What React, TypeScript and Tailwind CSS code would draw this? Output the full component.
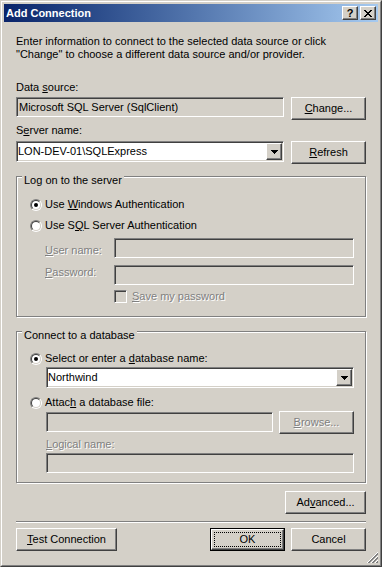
import React from "react";

const raised =
  "border border-t-white border-l-white border-r-[#404040] border-b-[#404040] shadow-[inset_-1px_-1px_0_#808080]";
const sunken =
  "border border-t-[#808080] border-l-[#808080] border-r-white border-b-white shadow-[inset_1px_1px_0_#404040,inset_-1px_-1px_0_#d4d0c8]";
const grayText = "text-[#808080] [text-shadow:1px_1px_0_#fff]";

function Button({
  children,
  className = "",
  disabled = false,
}: {
  children: React.ReactNode;
  className?: string;
  disabled?: boolean;
}) {
  return (
    <button
      type="button"
      className={`flex h-[23px] shrink-0 items-center justify-center bg-[#d4d0c8] ${raised} ${
        disabled ? grayText : "text-black"
      } ${className}`}
    >
      {children}
    </button>
  );
}

function DefaultButton({ children, className = "" }: { children: React.ReactNode; className?: string }) {
  return (
    <button type="button" className={`h-[23px] shrink-0 border border-black bg-[#d4d0c8] ${className}`}>
      <span className={`flex h-full w-full p-[2px] ${raised}`}>
        <span className="flex h-full w-full items-center justify-center border border-dotted border-black">
          {children}
        </span>
      </span>
    </button>
  );
}

function TextBox({
  children,
  className = "",
  gray = false,
}: {
  children?: React.ReactNode;
  className?: string;
  gray?: boolean;
}) {
  return (
    <div
      className={`flex h-[20px] items-center pl-[2px] ${sunken} ${gray ? "bg-[#d4d0c8]" : "bg-white"} ${className}`}
    >
      {children}
    </div>
  );
}

function DropArrow() {
  return (
    <svg width="7" height="4" viewBox="0 0 7 4" shapeRendering="crispEdges">
      <rect x="0" y="0" width="7" height="1" fill="#000" />
      <rect x="1" y="1" width="5" height="1" fill="#000" />
      <rect x="2" y="2" width="3" height="1" fill="#000" />
      <rect x="3" y="3" width="1" height="1" fill="#000" />
    </svg>
  );
}

function Combo({ value, className = "" }: { value: string; className?: string }) {
  return (
    <div className={`flex h-[21px] bg-white p-[1px] ${sunken} ${className}`}>
      <span className="flex flex-1 items-center">{value}</span>
      <span className={`flex h-[17px] w-[16px] items-center justify-center bg-[#d4d0c8] ${raised}`}>
        <DropArrow />
      </span>
    </div>
  );
}

function Radio({ checked = false }: { checked?: boolean }) {
  return (
    <span className="flex h-[12px] w-[12px] shrink-0 rounded-full border border-t-[#808080] border-l-[#808080] border-r-white border-b-white">
      <span className="flex h-full w-full items-center justify-center rounded-full border border-t-[#404040] border-l-[#404040] border-r-[#d4d0c8] border-b-[#d4d0c8] bg-white">
        {checked && <span className="h-[4px] w-[4px] rounded-full bg-black" />}
      </span>
    </span>
  );
}

function CaptionButton({ children }: { children: React.ReactNode }) {
  return (
    <span className={`flex h-[14px] w-[16px] items-center justify-center bg-[#d4d0c8] ${raised}`}>
      {children}
    </span>
  );
}

function CloseGlyph() {
  const cells = [
    [0, 0], [1, 0], [6, 0], [7, 0],
    [1, 1], [2, 1], [5, 1], [6, 1],
    [2, 2], [3, 2], [4, 2], [5, 2],
    [3, 3], [4, 3],
    [2, 4], [3, 4], [4, 4], [5, 4],
    [1, 5], [2, 5], [5, 5], [6, 5],
    [0, 6], [1, 6], [6, 6], [7, 6],
  ];
  return (
    <svg width="8" height="7" viewBox="0 0 8 7" shapeRendering="crispEdges">
      {cells.map(([x, y]) => (
        <rect key={`${x}-${y}`} x={x} y={y} width="1" height="1" fill="#000" />
      ))}
    </svg>
  );
}

function Grip() {
  const lines: { a: number; c: string }[] = [];
  [0, 4, 8].forEach((o) => {
    lines.push({ a: o + 1, c: "#ffffff" }, { a: o + 2, c: "#808080" }, { a: o + 3, c: "#808080" });
  });
  return (
    <svg width="12" height="12" viewBox="0 0 12 12" shapeRendering="crispEdges">
      {lines.map((l) => (
        <line key={l.a} x1={l.a} y1="12" x2="12" y2={l.a} stroke={l.c} strokeWidth="1" />
      ))}
    </svg>
  );
}

function Group({ title, children, className = "" }: { title: string; children: React.ReactNode; className?: string }) {
  return (
    <fieldset
      className={`border border-[#808080] shadow-[inset_1px_1px_0_#fff,1px_1px_0_#fff] ${className}`}
    >
      <legend className="ml-[5px] bg-[#d4d0c8] px-[2px] pt-[8px] leading-[13px]">{title}</legend>
      {children}
    </fieldset>
  );
}

export default function App() {
  return (
    <div className="h-[567px] w-[382px] border border-t-[#d4d0c8] border-l-[#d4d0c8] border-r-[#404040] border-b-[#404040] bg-[#d4d0c8] font-['Liberation_Sans',Arial,sans-serif] text-[11px] leading-[13px] text-black">
      <div className="flex h-full flex-col border border-t-white border-l-white border-r-[#808080] border-b-[#808080] p-[2px]">
        {/* caption */}
        <div className="flex h-[18px] shrink-0 items-center bg-linear-to-r from-[#0a246a] to-[#a6caf0] pl-[2px] pr-[2px]">
          <span className="font-bold text-white">Add Connection</span>
          <div className="ml-auto flex gap-[2px]">
            <CaptionButton>
              <span className="text-[11px] font-bold leading-none">?</span>
            </CaptionButton>
            <CaptionButton>
              <CloseGlyph />
            </CaptionButton>
          </div>
        </div>

        <div className="flex flex-1 flex-col px-[12px]">
          <p className="mt-[13px]">
            Enter information to connect to the selected data source or click
            <br />
            "Change" to choose a different data source and/or provider.
          </p>

          <div className="mt-[20px]">
            Data <u>s</u>ource:
          </div>
          <div className="mt-[3px] flex items-start justify-between">
            <TextBox gray className="w-[268px]">
              Microsoft SQL Server (SqlClient)
            </TextBox>
            <Button className="w-[75px]">
              <span>
                <u>C</u>hange...
              </span>
            </Button>
          </div>

          <div className="mt-[4px]">
            S<u>e</u>rver name:
          </div>
          <div className="mt-[4px] flex items-start justify-between">
            <Combo className="w-[268px]" value={"LON-DEV-01\\SQLExpress"} />
            <Button className="w-[75px]">
              <span>
                <u>R</u>efresh
              </span>
            </Button>
          </div>

          <Group title="Log on to the server" className="mt-[2px]">
            <div className="flex flex-col pb-[13px] pl-[13px] pr-[11px]">
              <div className="mt-[11px] flex h-[13px] items-center gap-[3px]">
                <Radio checked />
                <span>
                  Use <u>W</u>indows Authentication
                </span>
              </div>
              <div className="mt-[8px] flex h-[13px] items-center gap-[3px]">
                <Radio />
                <span>
                  Use S<u>Q</u>L Server Authentication
                </span>
              </div>
              <div className="mt-[6px] flex items-start">
                <span className={`ml-[15px] w-[69px] shrink-0 pt-[6px] ${grayText}`}>
                  <u>U</u>ser name:
                </span>
                <TextBox gray className="flex-1" />
              </div>
              <div className="mt-[7px] flex items-start">
                <span className={`ml-[15px] w-[69px] shrink-0 pt-[1px] ${grayText}`}>
                  <u>P</u>assword:
                </span>
                <TextBox gray className="flex-1" />
              </div>
              <div className="ml-[84px] mt-[5px] flex h-[13px] items-center gap-[5px]">
                <span className={`h-[13px] w-[13px] shrink-0 bg-[#d4d0c8] ${sunken}`} />
                <span className={grayText}>
                  <u>S</u>ave my password
                </span>
              </div>
            </div>
          </Group>

          <Group title="Connect to a database" className="mt-[4px]">
            <div className="flex flex-col pb-[9px] pl-[13px] pr-[11px]">
              <div className="mt-[10px] flex h-[13px] items-center gap-[3px]">
                <Radio checked />
                <span>
                  Select or enter a <u>d</u>atabase name:
                </span>
              </div>
              <Combo className="ml-[16px] mt-[2px]" value="Northwind" />
              <div className="mt-[8px] flex h-[13px] items-center gap-[3px]">
                <Radio />
                <span>
                  Attac<u>h</u> a database file:
                </span>
              </div>
              <div className="ml-[16px] mt-[2px] flex items-start gap-[6px]">
                <TextBox gray className="mt-[1px] flex-1" />
                <Button disabled className="w-[75px]">
                  <span>
                    <u>B</u>rowse...
                  </span>
                </Button>
              </div>
              <div className={`ml-[16px] mt-[4px] ${grayText}`}>
                <u>L</u>ogical name:
              </div>
              <TextBox gray className="ml-[16px] mt-[2px]" />
            </div>
          </Group>

          <Button className="mt-[8px] w-[81px] self-end">
            <span>
              Ad<u>v</u>anced...
            </span>
          </Button>

          <div className="mt-[7px] border-t border-b border-t-[#808080] border-b-white" />

          <div className="mt-[5px] flex items-start">
            <Button className="w-[101px]">
              <span>
                <u>T</u>est Connection
              </span>
            </Button>
            <div className="ml-auto flex gap-[6px]">
              <DefaultButton className="w-[75px]">OK</DefaultButton>
              <Button className="w-[75px]">Cancel</Button>
            </div>
          </div>

          <div className="-mr-[12px] mt-auto flex h-[12px] justify-end">
            <Grip />
          </div>
        </div>
      </div>
    </div>
  );
}
